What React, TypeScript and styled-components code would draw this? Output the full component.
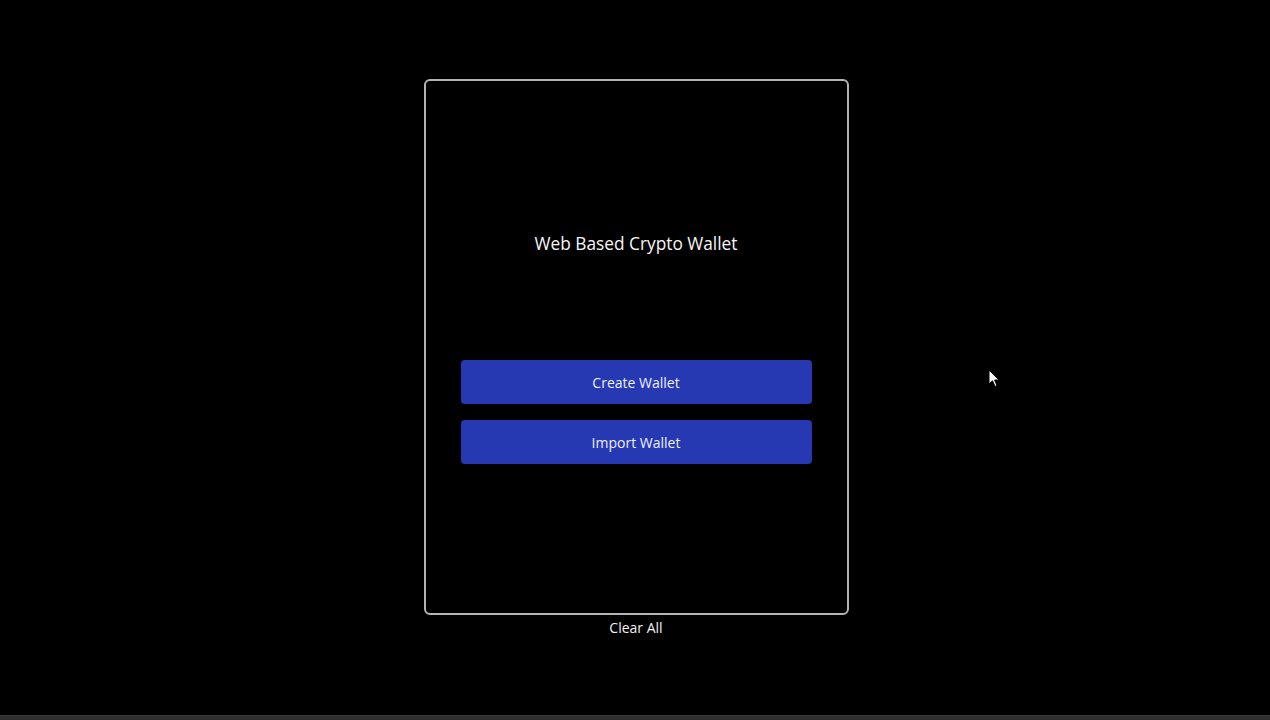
import React from 'react';
import styled, { createGlobalStyle } from 'styled-components';

const GlobalStyle = createGlobalStyle`
	html, body {
		margin: 0;
		padding: 0;
		background: #000;
		height: 100%;
	}
	body {
		font-family: 'Open Sans', 'Noto Sans', sans-serif;
		color: #f2f2f2;
	}
	#root {
		min-height: 100%;
	}
`;

const Page = styled.div`
	position: relative;
	height: 720px;
	box-sizing: border-box;
	padding-top: 79px;
	display: flex;
	flex-direction: column;
	align-items: center;
	overflow: hidden;
`;

const Card = styled.div`
	box-sizing: border-box;
	width: 425px;
	height: 536px;
	margin-left: 2px;
	border: 2px solid #b4b4b4;
	border-radius: 6px;
	padding-top: 151px;
	display: flex;
	flex-direction: column;
	align-items: center;
`;

const Title = styled.h1`
	margin: 0 0 104px;
	font-size: 17.3px;
	font-weight: 400;
	line-height: 24px;
	color: #f6f6f6;
`;

const Actions = styled.div`
	display: flex;
	flex-direction: column;
	gap: 16px;
	width: 351px;
`;

const ActionButton = styled.button`
	height: 44px;
	width: 100%;
	border: none;
	border-radius: 4px;
	background: #2639b2;
	color: #eef0ff;
	font-family: inherit;
	font-size: 14px;
	cursor: pointer;
`;

const ClearButton = styled.button`
	margin-top: 3px;
	margin-left: 2px;
	background: none;
	border: none;
	padding: 0;
	color: #f0f0f0;
	font-family: inherit;
	font-size: 14px;
	line-height: 20px;
	cursor: pointer;
`;

const Taskbar = styled.div`
	position: absolute;
	left: 0;
	right: 0;
	bottom: 0;
	height: 4px;
	background: #2e2e2e;
	border-top: 1px solid #3c3c3c;
`;

const Pointer = styled.svg`
	position: absolute;
	left: 988px;
	top: 369px;
`;

export default function App() {
	return (
		<>
			<GlobalStyle />
			<Page>
				<Card>
					<Title>Web Based Crypto Wallet</Title>
					<Actions>
						<ActionButton>Create Wallet</ActionButton>
						<ActionButton>Import Wallet</ActionButton>
					</Actions>
				</Card>
				<ClearButton>Clear All</ClearButton>
				<Pointer width="14" height="20" viewBox="0 0 14 20">
					<path d="M1 1 L1 15 L4.5 11.8 L7 17.5 L9 16.6 L6.6 11 L11 11 Z" fill="#fff" stroke="#000" strokeWidth="1" />
				</Pointer>
				<Taskbar />
			</Page>
		</>
	);
}
